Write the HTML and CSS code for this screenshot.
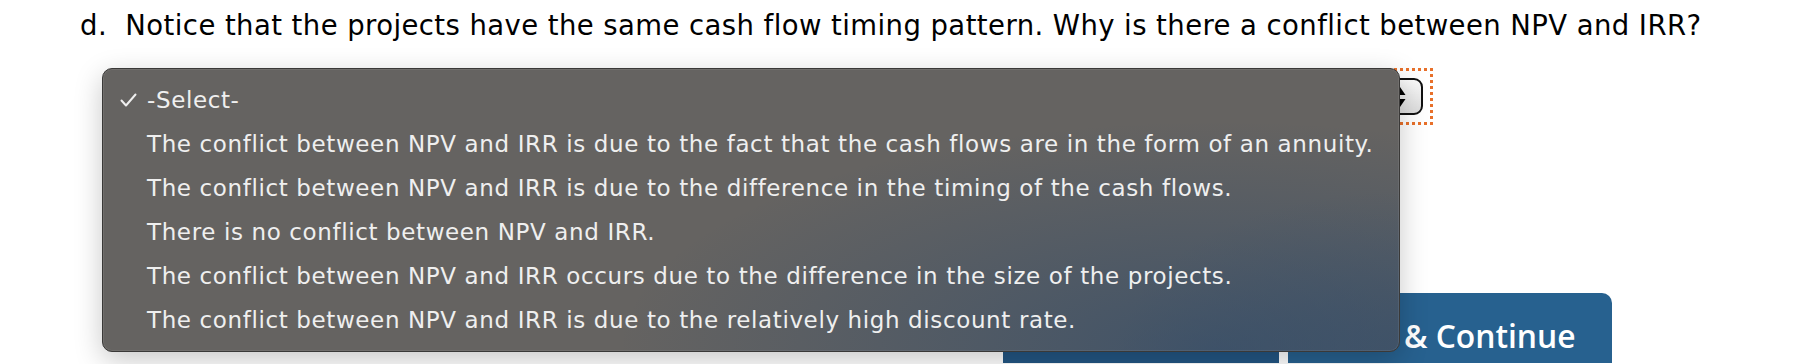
FILE: index.html
```html
<!DOCTYPE html>
<html lang="en">
<head>
<meta charset="utf-8">
<title>NPV vs IRR</title>
<link rel="stylesheet" href="styles.css">
</head>
<body>
<div class="page">
  <p class="question">d.&nbsp; Notice that the projects have the same cash flow timing pattern. Why is there a conflict between NPV and IRR?</p>
  <div class="answer-row">
    <span class="focus-ring">
      <span class="select">
        <span class="select-value">-Select-</span>
        <svg class="select-arrows" width="12" height="22" viewBox="0 0 12 22"><path d="M6 1 L11.5 9 H0.5 Z M6 21 L11.5 13 H0.5 Z" fill="#000"/></svg>
      </span>
    </span>
  </div>
  <div class="actions">
    <button class="btn btn-secondary">Submit</button>
    <button class="btn btn-primary">Save &amp; Continue</button>
  </div>
</div>
<ul class="menu">
  <li class="menu-item is-checked"><svg class="check" width="17" height="14" viewBox="0 0 17 14"><path d="M1.5 7.5 L6 12.5 L15.5 1.5" fill="none" stroke="#efefef" stroke-width="2" stroke-linecap="round" stroke-linejoin="round"/></svg>-Select-</li>
  <li class="menu-item">The conflict between NPV and IRR is due to the fact that the cash flows are in the form of an annuity.</li>
  <li class="menu-item">The conflict between NPV and IRR is due to the difference in the timing of the cash flows.</li>
  <li class="menu-item">There is no conflict between NPV and IRR.</li>
  <li class="menu-item">The conflict between NPV and IRR occurs due to the difference in the size of the projects.</li>
  <li class="menu-item">The conflict between NPV and IRR is due to the relatively high discount rate.</li>
</ul>
</body>
</html>
```

FILE: styles.css
```css
html, body {
  margin: 0;
  padding: 0;
  background: #ffffff;
  width: 1808px;
  height: 364px;
  overflow: hidden;
}

.page {
  font-family: "DejaVu Sans", Verdana, sans-serif;
  color: #000;
  display: flex;
  flex-direction: column;
}

.question {
  margin: 0;
  padding: 9px 0 0 80px;
  font-size: 27.5px;
  letter-spacing: 0.42px;
  line-height: 32px;
  white-space: nowrap;
}

.answer-row {
  display: flex;
  justify-content: flex-end;
  padding-right: 375px;
  margin-top: 27px;
}

.focus-ring {
  display: block;
  border: 3px dotted #e8702a;
  padding: 7px;
}

.select {
  display: flex;
  align-items: center;
  justify-content: space-between;
  box-sizing: border-box;
  width: 240px;
  height: 37px;
  padding: 0 15px 0 12px;
  border: 2px solid #111;
  border-radius: 9px;
  background: linear-gradient(#fafafa, #dcdcdc);
  font-size: 18px;
}

.select-arrows {
  display: block;
}

.actions {
  display: flex;
  justify-content: flex-end;
  gap: 9px;
  padding-right: 196px;
  margin-top: 168px;
}

.btn {
  display: flex;
  justify-content: center;
  align-items: flex-start;
  box-sizing: border-box;
  height: 70px;
  border: 0;
  border-radius: 10px 10px 0 0;
  color: #fff;
  font-family: "Open Sans", "Liberation Sans", sans-serif;
  font-weight: 600;
  font-size: 31.8px;
  line-height: 40px;
  padding: 23px 0 0;
  white-space: nowrap;
}

.btn-secondary {
  width: 276px;
  background: #235683;
}

.btn-primary {
  width: 324px;
  background: #27618f;
}

.menu {
  position: absolute;
  left: 102px;
  top: 68px;
  box-sizing: border-box;
  width: 1298px;
  height: 284px;
  margin: 0;
  padding: 9px 0 0 44px;
  list-style: none;
  border: 1px solid #3a3938;
  border-radius: 10px;
  background:
    radial-gradient(ellipse 600px 230px at 86% 100%, rgba(40, 72, 108, 0.6), rgba(40, 72, 108, 0) 100%),
    radial-gradient(ellipse 280px 160px at 100% 100%, rgba(40, 72, 108, 0.35), rgba(40, 72, 108, 0) 100%),
    #656361;
  box-shadow: 0 0 0 1px rgba(255, 255, 255, 0.08) inset, 0 8px 28px rgba(0, 0, 0, 0.22);
  font-family: "DejaVu Sans", Verdana, sans-serif;
  font-size: 23px;
  letter-spacing: 0.62px;
  line-height: 44px;
  color: #efefef;
}

.menu-item {
  position: relative;
  white-space: nowrap;
}

.check {
  position: absolute;
  left: -27px;
  top: 15px;
}
```
